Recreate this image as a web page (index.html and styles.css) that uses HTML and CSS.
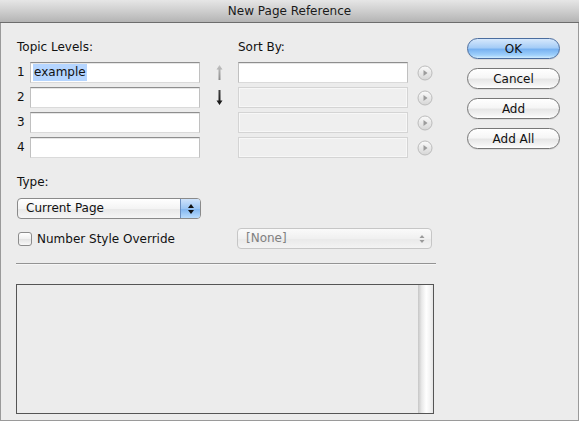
FILE: index.html
```html
<!DOCTYPE html>
<html>
<head>
<meta charset="utf-8">
<link rel="stylesheet" href="styles.css">
</head>
<body>
<div class="window">
  <div class="titlebar">New Page Reference</div>
  <div class="content">
    <div class="main">
      <div class="levels">
        <div class="head head-topic">Topic Levels:</div>
        <div class="head head-sort">Sort By:</div>

        <div class="num">1</div>
        <div class="field"><span class="sel">example</span></div>
        <div class="arrow">
          <svg width="7" height="15" viewBox="0 0 7 15"><defs><linearGradient id="ga" x1="0" y1="0" x2="0" y2="1"><stop offset="0" stop-color="#c4c4c4"/><stop offset="1" stop-color="#8c8c8c"/></linearGradient></defs><polygon points="3.5,0 6.5,4.5 4.5,4.5 4.5,15 2.5,15 2.5,4.5 0.5,4.5" fill="url(#ga)"/></svg>
        </div>
        <div class="field"></div>
        <div class="play"><svg width="16" height="16" viewBox="0 0 16 16"><defs><linearGradient id="gp" x1="0" y1="0" x2="0" y2="1"><stop offset="0" stop-color="#fbfbfb"/><stop offset="1" stop-color="#d6d6d6"/></linearGradient></defs><circle cx="8" cy="8" r="7" fill="url(#gp)" stroke="#bcbcbc"/><polygon points="6.5,5 10.5,8 6.5,11" fill="#9c9c9c"/></svg></div>

        <div class="num">2</div>
        <div class="field"></div>
        <div class="arrow">
          <svg width="7" height="15" viewBox="0 0 7 15"><defs><linearGradient id="gd" x1="0" y1="0" x2="0" y2="1"><stop offset="0" stop-color="#444"/><stop offset="1" stop-color="#111"/></linearGradient></defs><polygon points="3.5,15 6.5,10.5 4.5,10.5 4.5,0 2.5,0 2.5,10.5 0.5,10.5" fill="url(#gd)"/></svg>
        </div>
        <div class="field disabled"></div>
        <div class="play"><svg width="16" height="16" viewBox="0 0 16 16"><circle cx="8" cy="8" r="7" fill="url(#gp)" stroke="#bcbcbc"/><polygon points="6.5,5 10.5,8 6.5,11" fill="#9c9c9c"/></svg></div>

        <div class="num">3</div>
        <div class="field"></div>
        <div class="arrow"></div>
        <div class="field disabled"></div>
        <div class="play"><svg width="16" height="16" viewBox="0 0 16 16"><circle cx="8" cy="8" r="7" fill="url(#gp)" stroke="#bcbcbc"/><polygon points="6.5,5 10.5,8 6.5,11" fill="#9c9c9c"/></svg></div>

        <div class="num">4</div>
        <div class="field"></div>
        <div class="arrow"></div>
        <div class="field disabled"></div>
        <div class="play"><svg width="16" height="16" viewBox="0 0 16 16"><circle cx="8" cy="8" r="7" fill="url(#gp)" stroke="#bcbcbc"/><polygon points="6.5,5 10.5,8 6.5,11" fill="#9c9c9c"/></svg></div>
      </div>

      <div class="type-label">Type:</div>
      <div class="popup">
        <span class="popup-text">Current Page</span>
        <span class="stepper">
          <svg width="8" height="12" viewBox="0 0 8 12"><polygon points="4,1 7,5 1,5" fill="#111"/><polygon points="4,11 7,7 1,7" fill="#111"/></svg>
        </span>
      </div>

      <div class="override">
        <span class="checkbox"></span>
        <span class="check-label">Number Style Override</span>
        <div class="popup-off">
          <span class="popup-off-text">[None]</span>
          <span class="stepper-off">
            <svg width="8" height="12" viewBox="0 0 8 12"><polygon points="4,2 6.5,5 1.5,5" fill="#9a9a9a"/><polygon points="4,10 6.5,7 1.5,7" fill="#9a9a9a"/></svg>
          </span>
        </div>
      </div>

      <div class="separator"></div>

      <div class="listbox">
        <div class="list-area"></div>
        <div class="scroll"></div>
      </div>
    </div>

    <div class="side">
      <button class="btn btn-default">OK</button>
      <button class="btn">Cancel</button>
      <button class="btn">Add</button>
      <button class="btn">Add All</button>
    </div>
  </div>
</div>
</body>
</html>
```

FILE: styles.css
```css
html, body {
  margin: 0;
  padding: 0;
  background: #ececec;
}

body {
  font-family: "DejaVu Sans", "Liberation Sans", sans-serif;
  font-size: 12px;
  color: #111;
}

.window {
  width: 579px;
  height: 421px;
  box-sizing: border-box;
  border: 1px solid #9a9a9a;
  border-top: none;
  background: #ececec;
}

.titlebar {
  height: 22px;
  line-height: 22px;
  text-align: center;
  color: #1a1a1a;
  background: linear-gradient(#e6e6e6, #c9c9c9 60%, #b4b4b4);
  border-bottom: 1px solid #6d6d6d;
  margin: 0 -1px;
}

.content {
  display: flex;
  padding: 15px 0 0 15px;
}

.main {
  width: 420px;
  padding-top: 2px;
}

.levels {
  display: grid;
  grid-template-columns: 14px 170px 38px 170px 25px;
  grid-template-rows: 18px repeat(4, 21px);
  row-gap: 4px;
  align-items: center;
}

.head {
  line-height: 15px;
  align-self: start;
}

.head-topic {
  grid-column: 1 / 3;
  padding-left: 1px;
}

.head-sort {
  grid-column: 4 / 6;
}

.num {
  line-height: 15px;
  padding-left: 1px;
}

.field {
  height: 21px;
  box-sizing: border-box;
  background: #fff;
  border: 1px solid #c0c0c0;
  border-top-color: #8e8e8e;
  border-bottom-color: #dadada;
  box-shadow: inset 0 1px 0 #e6e6e6;
  padding: 1px 2px;
}

.field.disabled {
  background: #efefef;
  border: 1px solid #d4d4d4;
  box-shadow: inset 0 0 0 1px #f7f7f7;
}

.sel {
  display: inline-block;
  background: #b5d5ff;
  line-height: 17px;
  padding: 0 1px;
}

.arrow {
  height: 21px;
  display: flex;
  align-items: center;
  justify-content: center;
}

.play {
  height: 21px;
  display: flex;
  align-items: center;
  justify-content: flex-end;
}

.type-label {
  margin-top: 17px;
  line-height: 15px;
  padding-left: 1px;
}

.popup {
  margin-top: 8px;
  margin-left: 1px;
  width: 184px;
  height: 21px;
  box-sizing: border-box;
  border: 1px solid #8a8a8a;
  border-radius: 4px;
  background: linear-gradient(#ffffff, #f4f4f4 50%, #e8e8e8 51%, #f6f6f6);
  display: flex;
  align-items: center;
  overflow: hidden;
}

.popup-text {
  flex: 1;
  padding-left: 8px;
  line-height: 19px;
}

.stepper {
  width: 19px;
  height: 19px;
  border-left: 1px solid #6b8fc0;
  background: linear-gradient(#cfe3fb, #9cc6f4 50%, #7fb4ef 51%, #b9dcfd);
  display: flex;
  align-items: center;
  justify-content: center;
}

.override {
  margin-top: 9px;
  height: 21px;
  display: flex;
  align-items: center;
}

.checkbox {
  width: 14px;
  height: 14px;
  box-sizing: border-box;
  margin-left: 2px;
  border: 1px solid #8c8c8c;
  border-radius: 3px;
  background: linear-gradient(#ffffff, #f0f0f0 50%, #e4e4e4 51%, #f8f8f8);
}

.check-label {
  margin-left: 5px;
}

.popup-off {
  margin-left: auto;
  margin-right: 4px;
  width: 195px;
  height: 21px;
  box-sizing: border-box;
  border: 1px solid #c6c6c6;
  border-radius: 4px;
  background: linear-gradient(#fafafa, #f0f0f0 50%, #e9e9e9 51%, #f3f3f3);
  display: flex;
  align-items: center;
}

.popup-off-text {
  flex: 1;
  padding-left: 8px;
  color: #808080;
  line-height: 19px;
}

.stepper-off {
  width: 18px;
  height: 19px;
  display: flex;
  align-items: center;
  justify-content: center;
}

.separator {
  margin-top: 14px;
  height: 0;
  border-top: 1px solid #939393;
  border-bottom: 1px solid #f6f6f6;
}

.listbox {
  margin-top: 19px;
  width: 418px;
  height: 130px;
  box-sizing: border-box;
  border: 1px solid #555;
  display: flex;
}

.list-area {
  flex: 1;
  background: #ececec;
}

.scroll {
  width: 15px;
  background: linear-gradient(to right, #c6c6c6, #e9e9e9 25%, #ffffff 55%, #f1f1f1 85%, #e4e4e4);
}

.side {
  margin-left: 31px;
  width: 93px;
  display: flex;
  flex-direction: column;
  gap: 9px;
}

.btn {
  height: 21px;
  width: 93px;
  margin: 0;
  padding: 0;
  box-sizing: border-box;
  border: 1px solid #777;
  border-radius: 11px;
  font-family: "DejaVu Sans", "Liberation Sans", sans-serif;
  font-size: 12px;
  color: #111;
  background: linear-gradient(#ffffff, #f6f6f6 45%, #e7e7e7 55%, #f4f4f4 85%, #ffffff);
  box-shadow: 0 1px 0 rgba(0,0,0,0.08);
}

.btn-default {
  border-color: #4b6d9e;
  background: linear-gradient(#d6e8fc, #a6cdf7 45%, #78b2f1 55%, #9fd0fb 85%, #d0ecff);
}
```
